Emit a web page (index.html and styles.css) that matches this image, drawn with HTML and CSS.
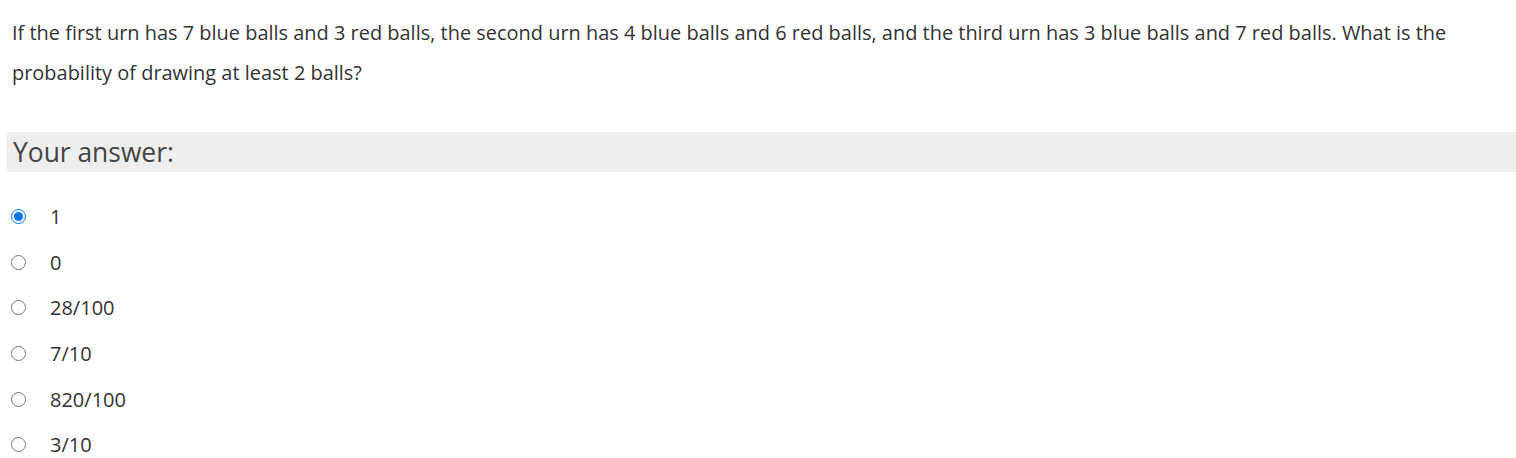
FILE: index.html
```html
<!DOCTYPE html>
<html>
<head>
<meta charset="utf-8">
<link rel="stylesheet" href="styles.css">
</head>
<body>
<div class="page">
  <p class="question">If the first urn has 7 blue balls and 3 red balls, the second urn has 4 blue balls and 6 red balls, and the third urn has 3 blue balls and 7 red balls. What is the probability of drawing at least 2 balls?</p>
  <div class="answer-head">Your answer:</div>
  <div class="options">
    <label class="option"><input type="radio" name="a" checked><span>1</span></label>
    <label class="option"><input type="radio" name="a"><span>0</span></label>
    <label class="option"><input type="radio" name="a"><span>28/100</span></label>
    <label class="option"><input type="radio" name="a"><span>7/10</span></label>
    <label class="option"><input type="radio" name="a"><span>820/100</span></label>
    <label class="option"><input type="radio" name="a"><span>3/10</span></label>
  </div>
</div>
</body>
</html>
```
FILE: styles.css
```css
html, body {
  margin: 0;
  padding: 0;
  background: #fff;
}
.page {
  padding: 13px 0 0 6px;
  font-family: "Open Sans", sans-serif;
  color: #333;
}
.question {
  margin: 0;
  padding-left: 6px;
  font-size: 19.97px;
  line-height: 40px;
}
.answer-head {
  margin-top: 39px;
  height: 40px;
  line-height: 40px;
  background: #eeeeee;
  border-radius: 4px 0 0 4px;
  padding-left: 7px;
  font-size: 26.4px;
  color: #444;
}
.options {
  display: flex;
  flex-direction: column;
  padding-top: 22px;
}
.option {
  display: flex;
  align-items: center;
  height: 45.6px;
  font-size: 20px;
}
.option input {
  margin: 0 0 0 5px;
  width: 15px;
  height: 15px;
}
.option span {
  margin-left: 24px;
}
```
